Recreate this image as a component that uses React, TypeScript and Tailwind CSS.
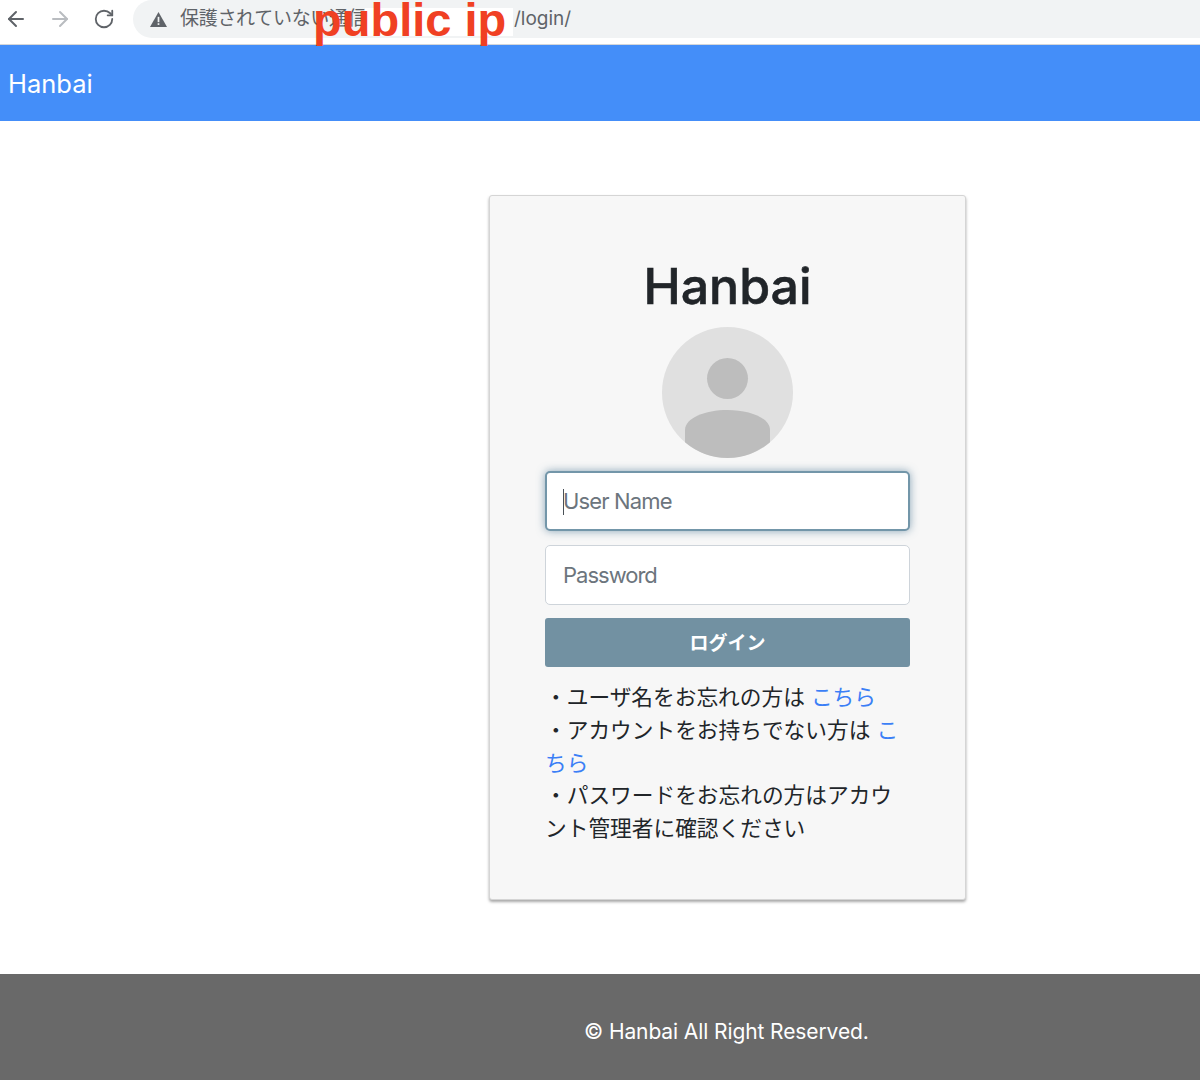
import { ArrowLeft, ArrowRight, RotateCw } from "lucide-react";

const sans = "font-['Inter','Noto_Sans_CJK_JP',sans-serif]";

const BrowserBar = () => (
  <div className="relative flex h-[45px] items-start border-b border-[#d4d6d9] bg-white">
    <div className="flex h-[38px] w-[133px] items-center pl-[4px] text-[#5f6368]">
      <ArrowLeft size={24} strokeWidth={2} />
      <ArrowRight size={24} strokeWidth={2} className="ml-[20px] text-[#b9bcc0]" />
      <RotateCw size={22} strokeWidth={2} className="ml-[21px]" />
    </div>
    <div className="flex h-[38px] flex-1 items-center rounded-l-[19px] bg-[#f1f3f4] pl-[17px] pt-[1px] text-[19px] tracking-[-0.3px] text-[#5f6368]">
      <svg width="17" height="15" viewBox="0 0 16 14" className="mr-[13px] shrink-0">
        <path d="M8 0 16 14H0Z" fill="#5f6368" />
        <rect x="7.2" y="4.5" width="1.6" height="5" fill="#f1f3f4" />
        <rect x="7.2" y="10.5" width="1.6" height="1.6" fill="#f1f3f4" />
      </svg>
      <span className="w-[185px] shrink-0 overflow-hidden whitespace-nowrap">保護されていない通信</span>
      <span className="mt-[4px] h-[28px] w-[148px] shrink-0 bg-white" />
      <span className="pl-[1px] tracking-[0px]">/login/</span>
    </div>
    <span className="absolute left-[313px] top-0 font-['Liberation_Sans',sans-serif] text-[47px] font-bold leading-[40px] text-[#f04023]">
      public ip
    </span>
  </div>
);

const Avatar = () => (
  <svg width="131" height="131" viewBox="0 0 131 131" className="mx-auto block">
    <circle cx="65.5" cy="65.5" r="65.5" fill="#e0e0e0" />
    <circle cx="65.5" cy="51.5" r="20.5" fill="#bdbdbd" />
    <path d="M23 115.3V103C23 91 43 83 65.5 83S108 91 108 103V115.3A65.5 65.5 0 0 1 23 115.3Z" fill="#bdbdbd" />
  </svg>
);

export default function App() {
  return (
    <div className={`flex h-[1080px] flex-col overflow-hidden bg-white text-[#212529] ${sans}`}>
      <BrowserBar />
      <nav className="flex h-[76px] items-center bg-[#448ef9] pl-2 pt-[2px] text-[25.5px] text-white">Hanbai</nav>

      <main className="flex flex-1 items-start pl-[489px] pt-[74px]">
        <div className="h-[705px] w-[477px] rounded-[3px] border border-[#d5d5d5] bg-[#f7f7f7] px-[55px] pt-[60px] shadow-[0_2px_3px_rgba(0,0,0,0.35)]">
          <h1 className="mb-[11px] text-center text-[50px] font-medium leading-[60px] [-webkit-text-stroke:0.6px_#212529]">Hanbai</h1>
          <Avatar />
          <div className="mt-[13px] flex h-[60px] items-center rounded-[5px] border-2 border-[#7396a9] bg-white px-[16px] pt-[1px] text-[22px] tracking-[-0.85px] text-[#6c757d] shadow-[0_0_8px_rgba(90,130,155,0.7)]">
            <span className="h-[26px] w-px bg-[#495057]" />
            <span className="-ml-[1px]">User Name</span>
          </div>
          <div className="mt-[14px] flex h-[60px] items-center rounded-[5px] border border-[#ced4da] bg-white px-[17px] text-[22px] tracking-[-1px] text-[#6c757d]">
            Password
          </div>
          <button className="mt-[13px] block h-[49px] w-full rounded-[3px] bg-[#7291a2] pt-[3px] text-[19px] font-bold text-white">
            ログイン
          </button>
          <p className="mt-[14px] text-[21.7px] leading-[32.8px]">
            ・ユーザ名をお忘れの方は <a className="text-[#3b7ff6]">こちら</a>
            <br />
            ・アカウントをお持ちでない方は <a className="text-[#3b7ff6]">こちら</a>
            <br />
            ・パスワードをお忘れの方はアカウント管理者に確認ください
          </p>
        </div>
      </main>

      <footer className="flex h-[106px] items-center bg-[#696969] pl-[584px] pt-[10px] text-[21px] tracking-[-0.1px] text-white">
        © Hanbai All Right Reserved.
      </footer>
    </div>
  );
}
